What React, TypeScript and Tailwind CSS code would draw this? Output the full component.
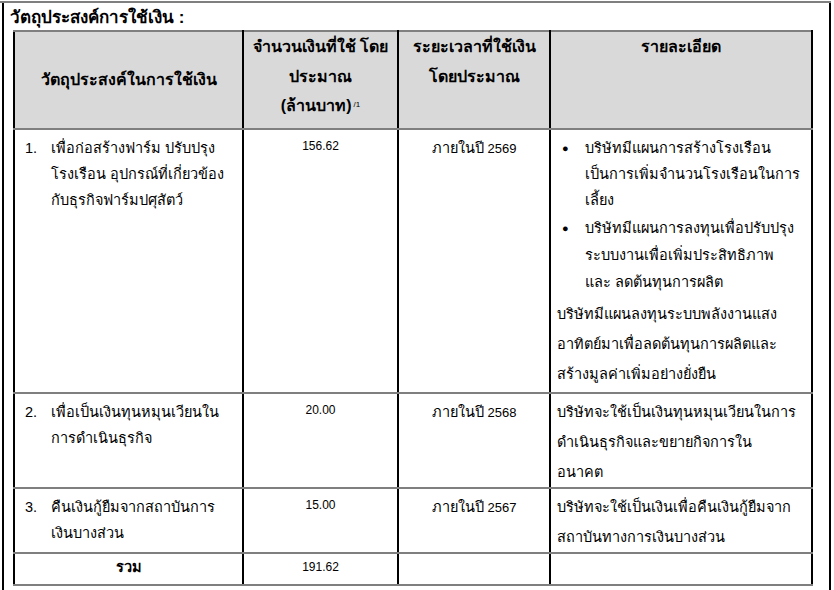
const rows = [
  {
    no: '1.',
    purpose: ['เพื่อก่อสร้างฟาร์ม ปรับปรุง', 'โรงเรือน อุปกรณ์ที่เกี่ยวข้อง', 'กับธุรกิจฟาร์มปศุสัตว์'],
    amount: '156.62',
    year: '2569',
    height: 'h-[264px]',
  },
  {
    no: '2.',
    purpose: ['เพื่อเป็นเงินทุนหมุนเวียนใน', 'การดำเนินธุรกิจ'],
    amount: '20.00',
    year: '2568',
    height: 'h-[95px]',
  },
  {
    no: '3.',
    purpose: ['คืนเงินกู้ยืมจากสถาบันการ', 'เงินบางส่วน'],
    amount: '15.00',
    year: '2567',
    height: 'h-[65px]',
  },
];

const cellX = 'border-x-2 border-x-black';
const cellY = 'border-y-2 border-y-[#7f7f7f]';

function Bullet() {
  return <span className="w-[28px] shrink-0 pl-[5px] text-[11px] leading-[26px]">●</span>;
}

function Details({ index }: { index: number }) {
  if (index === 0) {
    return (
      <div className="pt-[5px]">
        <ul className="space-y-[2px]">
          <li className="flex">
            <Bullet />
            <span className="leading-[26px]">
              บริษัทมีแผนการสร้างโรงเรือน
              <br />
              เป็นการเพิ่มจำนวนโรงเรือนในการ
              <br />
              <span className="leading-[22px]">เลี้ยง</span>
            </span>
          </li>
          <li className="flex">
            <Bullet />
            <span className="leading-[27px]">
              บริษัทมีแผนการลงทุนเพื่อปรับปรุง
              <br />
              ระบบงานเพื่อเพิ่มประสิทธิภาพ
              <br />
              และ ลดต้นทุนการผลิต
            </span>
          </li>
        </ul>
        <p className="mt-[3px] leading-[30px]">
          บริษัทมีแผนลงทุนระบบพลังงานแสง
          <br />
          อาทิตย์มาเพื่อลดต้นทุนการผลิตและ
          <br />
          สร้างมูลค่าเพิ่มอย่างยั่งยืน
        </p>
      </div>
    );
  }
  if (index === 1) {
    return (
      <p className="pt-[3px] leading-[30px]">
        บริษัทจะใช้เป็นเงินทุนหมุนเวียนในการ
        <br />
        ดำเนินธุรกิจและขยายกิจการใน
        <br />
        อนาคต
      </p>
    );
  }
  return (
    <p className="pt-[3px] leading-[30px]">
      บริษัทจะใช้เป็นเงินเพื่อคืนเงินกู้ยืมจาก
      <br />
      สถาบันทางการเงินบางส่วน
    </p>
  );
}

export default function App() {
  return (
    <div className="h-[590px] w-[834px] overflow-hidden bg-white font-['Liberation_Sans','Noto_Sans',sans-serif] text-[14.5px] text-black">
      <div className="mt-[1px] h-[600px] w-[831px] border-t-2 border-t-[#7f7f7f]">
        <div className="ml-[2px] h-full w-[829px] border-x-2 border-x-black">
          <h2 className="pl-[6px] pt-[2px] text-[17px] font-bold leading-[25px]">วัตถุประสงค์การใช้เงิน :</h2>
          <table className="ml-[9px] w-[798px] table-fixed border-collapse">
            <colgroup>
              <col className="w-[229px]" />
              <col className="w-[155px]" />
              <col className="w-[152px]" />
              <col className="w-[262px]" />
            </colgroup>
            <thead>
              <tr className="h-[98px] bg-[#d9d9d9] text-[16px]">
                <th className={`${cellX} ${cellY} align-middle font-bold`}>วัตถุประสงค์ในการใช้เงิน</th>
                <th className={`${cellX} ${cellY} align-top font-bold leading-[29.5px]`}>
                  <div>
                    จำนวนเงินที่ใช้ โดย
                    <br />
                    ประมาณ
                    <br />
                    (ล้านบาท)
                    <sup className="ml-[2px] text-[8px] font-normal">/1</sup>
                  </div>
                </th>
                <th className={`${cellX} ${cellY} align-top font-bold leading-[29.5px]`}>
                  <div>
                    ระยะเวลาที่ใช้เงิน
                    <br />
                    โดยประมาณ
                  </div>
                </th>
                <th className={`${cellX} ${cellY} align-top font-bold leading-[29.5px]`}>
                  <div>รายละเอียด</div>
                </th>
              </tr>
            </thead>
            <tbody>
              {rows.map((row, i) => (
                <tr key={row.no} className={row.height}>
                  <td className={`${cellX} ${cellY} align-top`}>
                    <div className="flex pt-[5px] leading-[26px]">
                      <span className="w-[36px] shrink-0 pl-[10px]">{row.no}</span>
                      <span>
                        {row.purpose.map((line) => (
                          <span key={line} className="block">
                            {line}
                          </span>
                        ))}
                      </span>
                    </div>
                  </td>
                  <td className={`${cellX} ${cellY} pt-[7px] text-center align-top text-[12px]`}>{row.amount}</td>
                  <td className={`${cellX} ${cellY} align-top`}>
                    <div className="pt-[5px] text-center leading-[26px]">
                      ภายในปี <span className="text-[13px]">{row.year}</span>
                    </div>
                  </td>
                  <td className={`${cellX} ${cellY} pl-[6px] align-top`}>
                    <Details index={i} />
                  </td>
                </tr>
              ))}
              <tr className="h-[32px]">
                <td className={`${cellX} ${cellY} pb-[2px] text-center align-middle font-bold`}>รวม</td>
                <td className={`${cellX} ${cellY} pt-[4px] text-center align-top text-[12px]`}>191.62</td>
                <td className={`${cellX} ${cellY}`} />
                <td className={`${cellX} ${cellY}`} />
              </tr>
            </tbody>
          </table>
        </div>
      </div>
    </div>
  );
}
